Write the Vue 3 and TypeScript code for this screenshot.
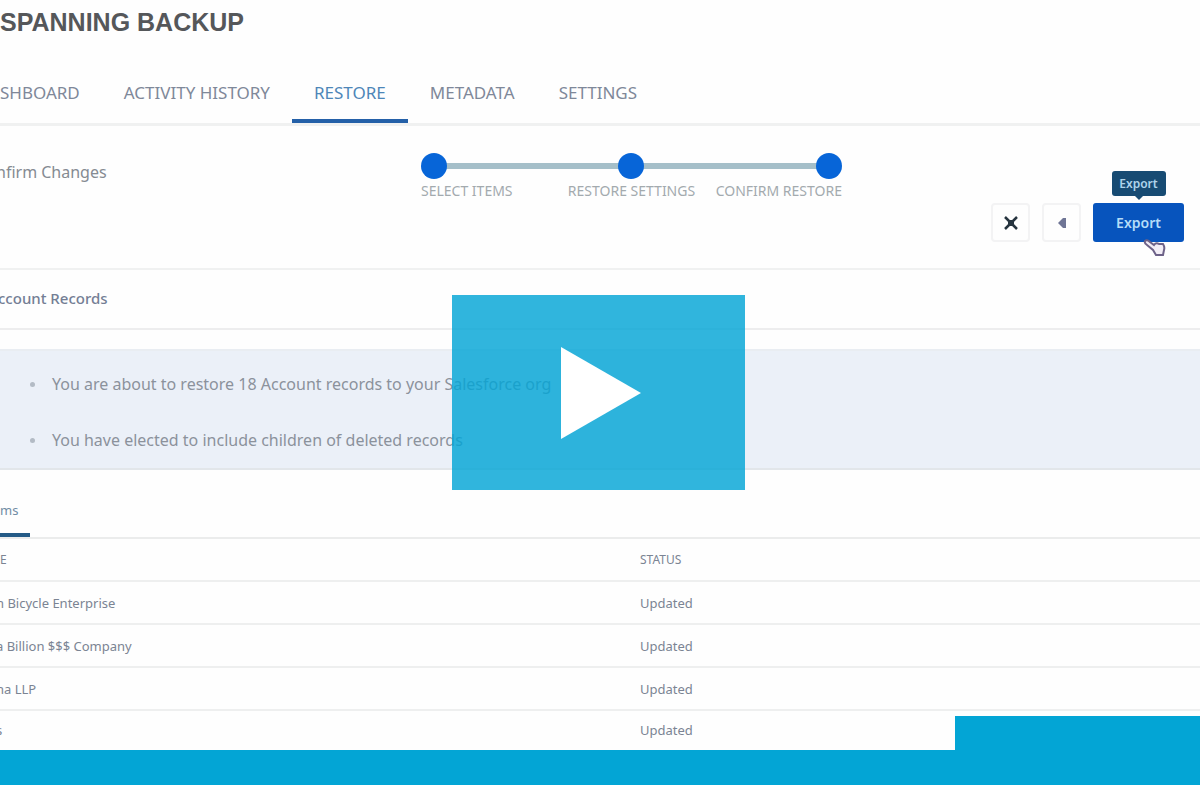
<script setup lang="ts">
import { ref } from 'vue'

interface RecordRow {
  name: string
  status: string
}

const tabs: string[] = ['SHBOARD', 'ACTIVITY HISTORY', 'RESTORE', 'METADATA', 'SETTINGS']
const activeTab = ref<string>('RESTORE')
const steps: string[] = ['SELECT ITEMS', 'RESTORE SETTINGS', 'CONFIRM RESTORE']
const notes: string[] = [
  'You are about to restore 18 Account records to your Salesforce org',
  'You have elected to include children of deleted records',
]
const rows: RecordRow[] = [
  { name: 'n Bicycle Enterprise', status: 'Updated' },
  { name: 'a Billion $$$ Company', status: 'Updated' },
  { name: 'na LLP', status: 'Updated' },
  { name: 's', status: 'Updated' },
]
</script>

<template>
  <div class="page">
    <main class="app">
      <h1 class="brand">SPANNING BACKUP</h1>

      <nav class="tabs">
        <a
          v-for="tab in tabs"
          :key="tab"
          href="#"
          class="tab"
          :class="{ active: tab === activeTab }"
          @click.prevent="activeTab = tab"
        >{{ tab }}</a>
      </nav>

      <section class="confirm">
        <div class="progress-row">
          <h2 class="confirm-title">nfirm Changes</h2>
          <ol class="stepper">
            <li v-for="step in steps" :key="step" class="step">
              <span class="dot"></span>
              <span class="step-label">{{ step }}</span>
            </li>
          </ol>
        </div>
        <div class="actions">
          <button type="button" class="icon-button" aria-label="Cancel">
            <svg width="16" height="16" viewBox="0 0 16 16" aria-hidden="true">
              <path d="M2 2L14 14M14 2L2 14" stroke="#26343f" stroke-width="2.500" />
              <rect x="5" y="5" width="6" height="6" fill="#26343f" />
            </svg>
          </button>
          <button type="button" class="icon-button" aria-label="Back">
            <svg width="10" height="12" viewBox="0 0 10 12" aria-hidden="true">
              <path d="M9 1V11H6L1 6L6 1Z" fill="#6f7595" />
            </svg>
          </button>
          <div class="export">
            <span id="export-tip" class="tooltip" role="tooltip">Export</span>
            <button type="button" class="export-button" aria-describedby="export-tip">Export</button>
            <svg class="pointer" width="24" height="18" viewBox="0 0 24 18" aria-hidden="true">
              <path
                d="M2 2Q4 0 7 3L11 6Q13 3 16 5L20 5Q22 8 21 11L20 16H13L10 11L4 6Q1 4 2 2Z"
                fill="#f3eef6"
                stroke="#6d6288"
                stroke-width="2"
              />
            </svg>
          </div>
        </div>
      </section>

      <h3 class="records-title">ccount Records</h3>

      <ul class="notes">
        <li v-for="note in notes" :key="note" class="note">{{ note }}</li>
      </ul>

      <div class="subtabs">
        <a href="#" class="subtab" @click.prevent>ms</a>
      </div>

      <table class="records">
        <thead>
          <tr>
            <th scope="col">E</th>
            <th scope="col">STATUS</th>
          </tr>
        </thead>
        <tbody>
          <tr v-for="row in rows" :key="row.name">
            <td>{{ row.name }}</td>
            <td>{{ row.status }}</td>
          </tr>
        </tbody>
      </table>
    </main>

    <footer class="footer"><span class="footer-step"></span></footer>

    <button type="button" class="play" aria-label="Play video">
      <svg width="80" height="92" viewBox="0 0 80 92" aria-hidden="true">
        <path d="M0 0L80 46L0 92Z" fill="#fff" />
      </svg>
    </button>
  </div>
</template>

<style>
body {
  margin: 0;
  background: #fefefe;
}
</style>

<style scoped>
.page {
  position: relative;
  display: flex;
  flex-direction: column;
  min-height: 100vh;
  overflow: hidden;
  color: #7b8493;
  font-family: "Noto Sans", "Open Sans", sans-serif;
}

.app {
  flex: 1;
}

.brand {
  margin: 0;
  padding: 6px 0 0;
  color: #55575a;
  font: 700 25px/32px "Liberation Sans", Arial, sans-serif;
}

.tabs {
  display: flex;
  margin-top: 24px;
  border-bottom: 3px solid #f0f1f1;
}

.tab {
  padding: 19px 22px 14px;
  border-bottom: 4px solid transparent;
  color: #7f8899;
  font-size: 17px;
  line-height: 24px;
  text-decoration: none;
}

.tab:first-child {
  padding-left: 0;
}

.tab.active {
  border-color: #2460a8;
  color: #4d86b8;
}

.confirm {
  padding: 27px 16px 26px 0;
  border-bottom: 2px solid #f0f1f1;
}

.progress-row {
  display: flex;
}

.confirm-title {
  flex: 0 0 421px;
  margin: 7px 0 0;
  color: #858b92;
  font-size: 16px;
  font-weight: 400;
  line-height: 24px;
  text-indent: -4px;
}

.stepper {
  position: relative;
  display: grid;
  grid-template-columns: repeat(3, 1fr);
  flex: 0 1 421px;
  margin: 0;
  padding: 0;
  list-style: none;
}

.stepper::before {
  content: "";
  position: absolute;
  top: 10px;
  left: 13px;
  right: 13px;
  height: 6px;
  background: #a5bfc9;
}

.step {
  position: relative;
  display: flex;
  flex-direction: column;
  align-items: center;
  gap: 4px;
}

.step:first-child {
  align-items: flex-start;
}

.step:last-child {
  align-items: flex-end;
}

.dot {
  width: 26px;
  height: 26px;
  border-radius: 50%;
  background: #0765d8;
}

.step-label {
  color: #a3aaae;
  font-size: 14px;
  line-height: 16px;
  white-space: nowrap;
}

.actions {
  display: flex;
  justify-content: flex-end;
  gap: 12px;
  margin-top: 4px;
}

.icon-button {
  display: flex;
  align-items: center;
  justify-content: center;
  width: 39px;
  height: 39px;
  padding: 0;
  border: 2px solid #f3f3f4;
  border-radius: 4px;
  background: #fefefe;
}

.export {
  position: relative;
}

.export-button {
  width: 91px;
  height: 39px;
  padding: 0;
  border: 0;
  border-radius: 3px;
  background: #0754bd;
  color: #b5dcf8;
  font: 600 14px/20px "Noto Sans", sans-serif;
}

.tooltip {
  position: absolute;
  bottom: calc(100% + 7px);
  left: 50%;
  width: 54px;
  transform: translateX(-50%);
  border-radius: 3px;
  background: #174b73;
  color: #aed4ec;
  font-size: 12px;
  font-weight: 600;
  line-height: 25px;
  text-align: center;
}

.tooltip::after {
  content: "";
  position: absolute;
  top: 100%;
  left: 50%;
  transform: translateX(-50%);
  border: 4px solid transparent;
  border-top-color: #174b73;
}

.pointer {
  position: absolute;
  bottom: -15px;
  left: 50px;
}

.records-title {
  margin: 0;
  padding: 16px 0 18px;
  border-bottom: 2px solid #ededee;
  color: #747e95;
  font-size: 15px;
  font-weight: 500;
  line-height: 24px;
  text-indent: -2px;
}

.notes {
  display: flex;
  flex-direction: column;
  gap: 32px;
  margin: 19px 0 0;
  padding: 21px 0 16px 52px;
  border-top: 2px solid #e9edf2;
  border-bottom: 2px solid #e2e6ea;
  background: #ebf0f8;
  list-style: none;
}

.note {
  position: relative;
  color: #8b929c;
  font-size: 16px;
  line-height: 24px;
}

.note::before {
  content: "";
  position: absolute;
  top: 10px;
  left: -22px;
  width: 5px;
  height: 5px;
  border-radius: 50%;
  background: #b3bbc5;
}

.subtabs {
  display: flex;
  margin-top: 28px;
  border-bottom: 2px solid #ebecec;
}

.subtab {
  width: 30px;
  padding-bottom: 11px;
  border-bottom: 4px solid #245a86;
  color: #718ca5;
  font-size: 13px;
  line-height: 24px;
  text-decoration: none;
}

.records {
  width: 100%;
  border-collapse: collapse;
  table-layout: fixed;
}

.records th,
.records td {
  height: 41px;
  padding: 0;
  border-bottom: 2px solid #eeefef;
  font-size: 13px;
  font-weight: 400;
  line-height: 20px;
  text-align: left;
}

.records th {
  font-size: 12px;
}

.records td:first-child {
  text-indent: -4px;
}

.records th:last-child,
.records td:last-child {
  width: 560px;
}

.records tbody tr:last-child td {
  height: 38px;
  border-bottom: 0;
}

.footer {
  position: relative;
  height: 35px;
  background: #03a5d5;
}

.footer-step {
  position: absolute;
  right: 0;
  bottom: 100%;
  width: 245px;
  height: 34px;
  background: #03a5d5;
}

.play {
  position: absolute;
  inset: 0 3px 0 0;
  margin: auto;
  display: flex;
  align-items: center;
  justify-content: center;
  width: 293px;
  height: 195px;
  padding: 0 0 0 4px;
  border: 0;
  background: rgba(3, 165, 213, 0.82);
}
</style>
